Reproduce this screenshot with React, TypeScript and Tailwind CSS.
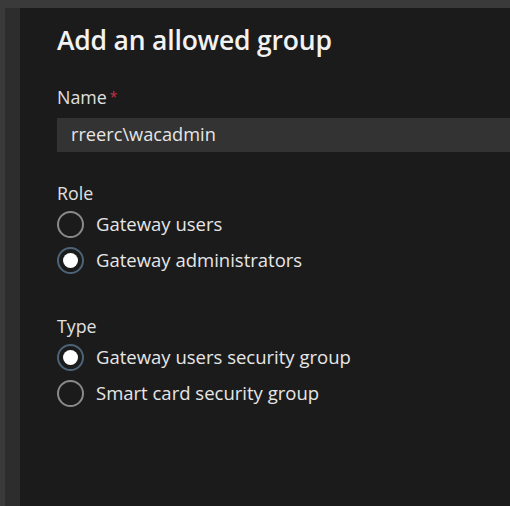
import React from "react";

function Radio({ checked, label }: { checked: boolean; label: string }) {
  return (
    <div className="flex items-center h-[36px]">
      <div
        className={
          checked
            ? "w-[27px] h-[27px] rounded-full border-2 border-[#4d6377] flex items-center justify-center"
            : "w-[27px] h-[27px] rounded-full border-2 border-[#8a8a8a]"
        }
      >
        {checked && <div className="w-[15px] h-[15px] rounded-full bg-white" />}
      </div>
      <span className="ml-[12px] text-[18.5px] text-[#e6e6e6] leading-[24px]">{label}</span>
    </div>
  );
}

export default function App() {
  return (
    <div
      className="w-[510px] h-[506px] bg-[#3a3a3a] flex flex-col overflow-hidden"
      style={{ fontFamily: '"Open Sans", "Noto Sans", sans-serif' }}
    >
      <div className="h-[8px] shrink-0" />
      <div className="flex flex-1">
        <div className="w-[5px] bg-[#3a3a3a]" />
        <div className="w-[15px] bg-[#2d2d2d]" />
        <div className="flex-1 bg-[#1b1b1b] pl-[37px] pt-[15px]">
          <h1 className="text-[26.5px] font-semibold text-[#f2f2f2] leading-[34px] tracking-[-0.2px]">
            Add an allowed group
          </h1>
          <div className="mt-[28px] text-[17.8px] text-[#e0e0e0] leading-[24px]">
            Name<span className="text-[#c4314b] ml-[3px] text-[14px] align-top">*</span>
          </div>
          <div className="mt-[9px] h-[34px] bg-[#333333] flex items-center pl-[14px] text-[18.2px] text-[#e6e6e6]">
            rreerc\wacadmin
          </div>
          <div className="mt-[29px] text-[17.8px] text-[#e0e0e0] leading-[24px]">Role</div>
          <div className="flex flex-col mt-[1px]">
            <Radio checked={false} label="Gateway users" />
            <Radio checked={true} label="Gateway administrators" />
          </div>
          <div className="mt-[36px] text-[17.8px] text-[#e0e0e0] leading-[24px]">Type</div>
          <div className="flex flex-col mt-[1px]">
            <Radio checked={true} label="Gateway users security group" />
            <Radio checked={false} label="Smart card security group" />
          </div>
        </div>
      </div>
    </div>
  );
}
